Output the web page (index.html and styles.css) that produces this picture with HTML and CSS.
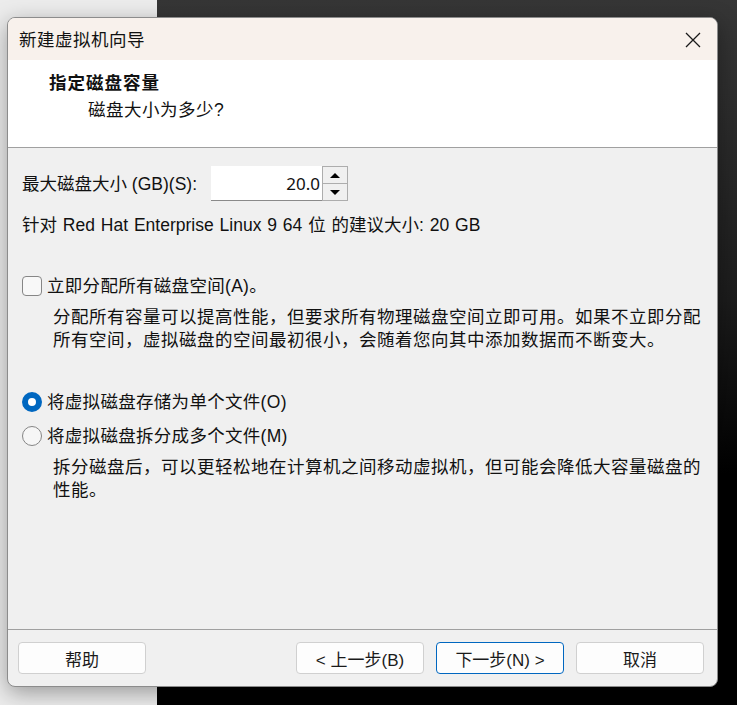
FILE: index.html
```html
<!DOCTYPE html>
<html lang="zh-CN">
<head>
<meta charset="utf-8">
<title>新建虚拟机向导</title>
<link rel="stylesheet" href="styles.css">
</head>
<body>
<div class="dialog">
  <div class="titlebar">
    <span class="title">新建虚拟机向导</span>
    <svg class="close" width="16" height="16" viewBox="0 0 16 16"><path d="M1 1 L15 15 M15 1 L1 15" stroke="#1a1a1a" stroke-width="1.3" fill="none"/></svg>
  </div>
  <div class="header">
    <div class="h-title">指定磁盘容量</div>
    <div class="h-sub">磁盘大小为多少?</div>
  </div>
  <div class="content">
    <div class="size-row">
      <span class="label">最大磁盘大小 (GB)(S):</span>
      <div class="spin">
        <div class="spin-input">20.0</div>
        <div class="spin-btns">
          <div class="spin-btn"><span class="tri-up"></span></div>
          <div class="spin-btn"><span class="tri-down"></span></div>
        </div>
      </div>
    </div>
    <div class="recommend">针对 Red Hat Enterprise Linux 9 64 位 的建议大小: 20 GB</div>
    <div class="option check-opt">
      <span class="checkbox"></span>
      <span class="opt-label">立即分配所有磁盘空间(A)。</span>
    </div>
    <p class="desc">分配所有容量可以提高性能，但要求所有物理磁盘空间立即可用。如果不立即分配<br>所有空间，虚拟磁盘的空间最初很小，会随着您向其中添加数据而不断变大。</p>
    <div class="option radio-opt1">
      <span class="radio checked"></span>
      <span class="opt-label">将虚拟磁盘存储为单个文件(O)</span>
    </div>
    <div class="option radio-opt2">
      <span class="radio"></span>
      <span class="opt-label">将虚拟磁盘拆分成多个文件(M)</span>
    </div>
    <p class="desc">拆分磁盘后，可以更轻松地在计算机之间移动虚拟机，但可能会降低大容量磁盘的<br>性能。</p>
  </div>
  <div class="footer">
    <button class="btn">帮助</button>
    <div class="spacer"></div>
    <button class="btn">&lt; 上一步(B)</button>
    <button class="btn primary">下一步(N) &gt;</button>
    <button class="btn">取消</button>
  </div>
</div>
</body>
</html>
```
FILE: styles.css
```css
html, body {
  margin: 0;
  padding: 0;
}
body {
  width: 737px;
  height: 705px;
  overflow: hidden;
  font-family: "Liberation Sans", "Noto Sans CJK SC", sans-serif;
  font-size: 17.5px;
  color: #111;
  background:
    linear-gradient(to right, #ececec 0, #ececec 157px, transparent 157px),
    linear-gradient(to bottom, #363636 0, #1c1c1c 300px, #000 480px, #000 100%);
}
.dialog {
  box-sizing: border-box;
  margin: 17px 0 0 7px;
  width: 711px;
  height: 670px;
  border: 1px solid #8c8c8c;
  border-radius: 8px;
  overflow: hidden;
  background: #f0f0f0;
  display: flex;
  flex-direction: column;
  box-shadow: 0 6px 22px rgba(0, 0, 0, 0.35);
}
.titlebar {
  height: 42px;
  background: #f8f1ec;
  display: flex;
  align-items: center;
  padding: 0 16px 0 11px;
  flex: none;
}
.title {
  flex: 1;
  letter-spacing: 0.5px;
  line-height: 22px;
  padding-top: 1px;
}
.close {
  display: block;
  margin-top: 1px;
}
.header {
  flex: none;
  height: 88px;
  box-sizing: border-box;
  background: #fff;
  border-bottom: 1px solid #a0a0a0;
  padding: 12px 0 0 41px;
}
.h-title {
  font-weight: 700;
  line-height: 23px;
  letter-spacing: 1px;
}
.h-sub {
  line-height: 23px;
  margin-top: 4px;
  padding-left: 39px;
  letter-spacing: 0.5px;
}
.content {
  flex: 1;
  padding: 18px 14px 0 14px;
}
.size-row {
  display: flex;
  align-items: center;
  height: 35px;
}
.label {
  width: 189px;
  line-height: 23px;
  padding-top: 1px;
}
.spin {
  display: flex;
  height: 35px;
}
.spin-input {
  box-sizing: border-box;
  width: 111px;
  height: 35px;
  background: #fff;
  border-bottom: 1px solid #8a8a8a;
  text-align: right;
  padding-right: 2px;
  line-height: 35px;
  font-family: "Noto Sans", sans-serif;
  font-size: 17px;
}
.spin-btns {
  box-sizing: border-box;
  width: 26px;
  height: 35px;
  border: 1px solid #adadad;
  display: flex;
  flex-direction: column;
  background: #f0f0f0;
}
.spin-btn {
  flex: 1;
  display: flex;
  align-items: center;
  justify-content: center;
}
.spin-btn + .spin-btn {
  border-top: 1px solid #adadad;
}
.tri-up {
  width: 0;
  height: 0;
  border-left: 5px solid transparent;
  border-right: 5px solid transparent;
  border-bottom: 5px solid #000;
}
.tri-down {
  width: 0;
  height: 0;
  border-left: 5px solid transparent;
  border-right: 5px solid transparent;
  border-top: 5px solid #000;
}
.recommend {
  margin-top: 13px;
  line-height: 23px;
  word-spacing: 1px;
}
.option {
  display: flex;
  align-items: center;
  height: 20px;
}
.check-opt {
  margin-top: 39px;
}
.radio-opt1 {
  margin-top: 40px;
}
.radio-opt2 {
  margin-top: 14px;
}
.opt-label {
  margin-left: 5px;
  line-height: 23px;
  letter-spacing: 0.3px;
}
.checkbox {
  box-sizing: border-box;
  width: 20px;
  height: 20px;
  border: 1px solid #868686;
  border-radius: 4px;
  background: #f8f8f8;
  flex: none;
}
.radio {
  box-sizing: border-box;
  width: 20px;
  height: 20px;
  border: 1px solid #858585;
  border-radius: 50%;
  background: #f6f6f6;
  flex: none;
}
.radio.checked {
  border: 6px solid #0067c0;
  background: #fff;
}
.desc {
  margin: 10px 0 0 31px;
  line-height: 23px;
  letter-spacing: 0.5px;
  white-space: nowrap;
}
.footer {
  flex: none;
  border-top: 1px solid #a0a0a0;
  padding: 12px 13px 12px 10px;
  display: flex;
  gap: 12px;
}
.spacer {
  flex: 1;
}
.btn {
  box-sizing: border-box;
  width: 128px;
  height: 32px;
  border: 1px solid #d0d0d0;
  border-radius: 4px;
  background: #fdfdfd;
  font-family: "Liberation Sans", "Noto Sans CJK SC", sans-serif;
  font-size: 17px;
  color: #1a1a1a;
  padding: 0;
}
.btn.primary {
  border-color: #0067c0;
}
```
